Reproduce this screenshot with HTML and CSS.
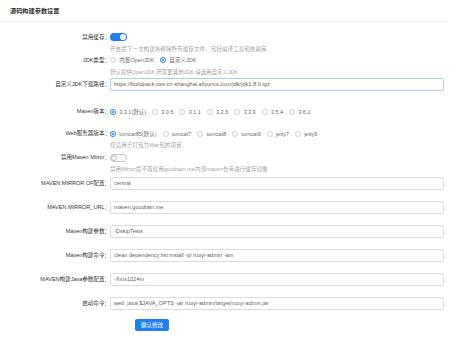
FILE: index.html
```html
<!DOCTYPE html>
<html lang="zh-CN">
<head>
<meta charset="utf-8">
<title>源码构建参数设置</title>
<link rel="stylesheet" href="styles.css">
</head>
<body>
<div class="card">
  <div class="header">源码构建参数设置</div>
  <div class="form">
    <div class="item gap-help0">
      <div class="label">禁用缓存：</div>
      <div class="control"><span class="switch on"></span></div>
      <div class="help">开启后下一次构建将移除所有缓存文件，包括编译工具和依赖库</div>
    </div>
    <div class="item gap-help1">
      <div class="label">JDK类型：</div>
      <div class="control radios">
        <span class="radio"><i class="dot"></i><span class="rtext">内置OpenJDK</span></span>
        <span class="radio checked"><i class="dot"></i><span class="rtext">自定义JDK</span></span>
      </div>
      <div class="help tight">默认提供OpenJDK,若需要其他JDK,请选用自定义JDK</div>
    </div>
    <div class="item gap-big">
      <div class="label">自定义JDK下载路径：</div>
      <div class="control"><input class="input hover" value="https://buildpack.oss-cn-shanghai.aliyuncs.com/jdk/jdk1.8.0.tgz"></div>
    </div>
    <div class="item gap-mid">
      <div class="label">Maven版本：</div>
      <div class="control radios">
        <span class="radio checked"><i class="dot"></i><span class="rtext">3.3.1(默认)</span></span>
        <span class="radio"><i class="dot"></i><span class="rtext">3.0.5</span></span>
        <span class="radio"><i class="dot"></i><span class="rtext">3.1.1</span></span>
        <span class="radio"><i class="dot"></i><span class="rtext">3.2.5</span></span>
        <span class="radio"><i class="dot"></i><span class="rtext">3.3.9</span></span>
        <span class="radio"><i class="dot"></i><span class="rtext">3.5.4</span></span>
        <span class="radio"><i class="dot"></i><span class="rtext">3.6.2</span></span>
      </div>
    </div>
    <div class="item gap-help1">
      <div class="label">Web服务器版本：</div>
      <div class="control radios">
        <span class="radio checked"><i class="dot"></i><span class="rtext">tomcat85(默认)</span></span>
        <span class="radio"><i class="dot"></i><span class="rtext">tomcat7</span></span>
        <span class="radio"><i class="dot"></i><span class="rtext">tomcat8</span></span>
        <span class="radio"><i class="dot"></i><span class="rtext">tomcat9</span></span>
        <span class="radio"><i class="dot"></i><span class="rtext">jetty7</span></span>
        <span class="radio"><i class="dot"></i><span class="rtext">jetty9</span></span>
      </div>
      <div class="help">仅适用于打包为War包的项目</div>
    </div>
    <div class="item gap-help2">
      <div class="label">禁用Maven Mirror：</div>
      <div class="control"><span class="switch off"></span></div>
      <div class="help">禁用Mirror后不再使用goodrain.me内部maven仓库进行缓存镜像</div>
    </div>
    <div class="item gap-std">
      <div class="label">MAVEN MIRROR OF配置：</div>
      <div class="control"><input class="input" value="central"></div>
    </div>
    <div class="item gap-std">
      <div class="label">MAVEN MIRROR_URL：</div>
      <div class="control"><input class="input" value="maven.goodrain.me"></div>
    </div>
    <div class="item gap-std">
      <div class="label">Maven构建参数：</div>
      <div class="control"><input class="input" value="-DskipTests"></div>
    </div>
    <div class="item gap-std">
      <div class="label">Maven构建命令：</div>
      <div class="control"><input class="input" value="clean dependency:list install -pl ruoyi-admin -am"></div>
    </div>
    <div class="item gap-std">
      <div class="label">MAVEN构建Java参数配置：</div>
      <div class="control"><input class="input" value="-Xmx1024m"></div>
    </div>
    <div class="item gap-btn">
      <div class="label">启动命令：</div>
      <div class="control"><input class="input" value="web: java $JAVA_OPTS -jar ruoyi-admin/target/ruoyi-admin.jar"></div>
    </div>
    <div class="actions">
      <button class="btn" type="button">确认修改</button>
    </div>
  </div>
</div>
</body>
</html>
```
FILE: styles.css
```css
html, body {
  margin: 0;
  padding: 0;
  background: #fff;
}
body {
  font-family: "Liberation Sans", "Noto Sans CJK SC", sans-serif;
  font-size: 5.6px;
  color: rgba(0, 0, 0, 0.85);
}
.card {
  width: 448px;
}
.header {
  height: 21px;
  line-height: 21px;
  padding-left: 10px;
  font-size: 6.2px;
  font-weight: 600;
  color: rgba(0, 0, 0, 0.85);
  border-bottom: 1px solid #ececec;
}
.form {
  padding-top: 8.5px;
}
.item {
  display: grid;
  grid-template-columns: 110px 334px;
  grid-auto-rows: auto;
}
.label {
  height: 13px;
  line-height: 13px;
  text-align: right;
  white-space: nowrap;
  color: rgba(0, 0, 0, 0.85);
  letter-spacing: -0.05px;
}
.control {
  height: 13px;
  display: flex;
  align-items: center;
}
.help {
  grid-column: 2;
  line-height: 10px;
  height: 10px;
  color: rgba(0, 0, 0, 0.42);
  white-space: nowrap;
}
.help.tight {
  letter-spacing: -0.15px;
}
.gap-help0 { margin-bottom: 0; }
.gap-help1 { margin-bottom: 1.2px; }
.gap-help2 { margin-bottom: 2.5px; }
.gap-big { margin-bottom: 14.5px; }
.gap-mid { margin-bottom: 9px; }
.gap-std { margin-bottom: 11px; }
.gap-btn { margin-bottom: 9.5px; }

.switch {
  position: relative;
  display: inline-block;
  box-sizing: border-box;
  width: 17px;
  height: 8px;
  border-radius: 4px;
}
.switch::after {
  content: "";
  position: absolute;
  top: 1px;
  width: 6px;
  height: 6px;
  border-radius: 50%;
  background: #fff;
  box-sizing: border-box;
}
.switch.on {
  background: #1f7ef0;
}
.switch.on::after {
  right: 1px;
}
.switch.off {
  background: #fff;
  border: 1px solid #c4c4c4;
}
.switch.off::after {
  top: 0;
  left: 0;
  border: 1px solid #bdbdbd;
}

.radio {
  display: inline-flex;
  align-items: center;
  margin-right: 2.8px;
  white-space: nowrap;
}
.dot {
  position: relative;
  display: inline-block;
  box-sizing: border-box;
  width: 6px;
  height: 6px;
  border: 1px solid #d0d0d0;
  border-radius: 50%;
  background: #fff;
}
.radio.checked .dot {
  border-color: #1f7ef0;
}
.radio.checked .dot::after {
  content: "";
  position: absolute;
  left: 1px;
  top: 1px;
  width: 2px;
  height: 2px;
  border-radius: 50%;
  background: #1f7ef0;
}
.rtext {
  padding: 0 3.2px;
  color: rgba(0, 0, 0, 0.65);
  letter-spacing: -0.05px;
}

.input {
  box-sizing: border-box;
  width: 334px;
  height: 13px;
  margin: 0;
  padding: 0 3px;
  border: 1px solid #dcdcdc;
  border-radius: 2px;
  font-family: "Liberation Sans", "Noto Sans CJK SC", sans-serif;
  font-size: 5.6px;
  color: rgba(0, 0, 0, 0.7);
  background: #fff;
  outline: none;
}
.input.hover {
  border-color: #a9cdf2;
}

.actions {
  padding-left: 135px;
}
.btn {
  display: block;
  box-sizing: border-box;
  width: 34px;
  height: 12px;
  margin: 0;
  padding: 0;
  border: none;
  border-radius: 2px;
  background: #1f7ef0;
  color: #fff;
  font-family: "Liberation Sans", "Noto Sans CJK SC", sans-serif;
  font-size: 5.6px;
  line-height: 12px;
}
```
